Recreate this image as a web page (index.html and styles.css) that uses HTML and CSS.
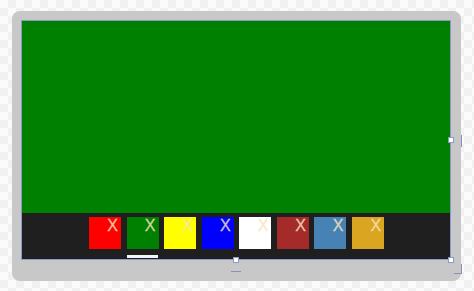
FILE: index.html
```html
<!DOCTYPE html>
<html>
<head>
<meta charset="utf-8">
<link rel="stylesheet" href="styles.css">
</head>
<body>
<div class="frame">
  <div class="content">
    <div class="stage"></div>
    <div class="bar">
      <div class="tab"><div class="sw" style="background:#ff0000"><span class="x">X</span></div></div>
      <div class="tab active"><div class="sw" style="background:#008000"><span class="x">X</span></div></div>
      <div class="tab"><div class="sw" style="background:#ffff00"><span class="x">X</span></div></div>
      <div class="tab"><div class="sw" style="background:#0000ff"><span class="x">X</span></div></div>
      <div class="tab"><div class="sw" style="background:#ffffff"><span class="x">X</span></div></div>
      <div class="tab"><div class="sw" style="background:#a52a2a"><span class="x">X</span></div></div>
      <div class="tab"><div class="sw" style="background:#4682b4"><span class="x">X</span></div></div>
      <div class="tab"><div class="sw" style="background:#daa520"><span class="x">X</span></div></div>
    </div>
    <span class="handle h-right"></span>
    <span class="handle h-bottom"></span>
    <span class="handle h-corner"></span>
  </div>
  <span class="grip g-right"></span>
  <span class="grip g-bottom"></span>
  <span class="grip g-corner"></span>
</div>
</body>
</html>
```
FILE: styles.css
```css
html, body {
  margin: 0;
  padding: 0;
}
body {
  width: 474px;
  height: 291px;
  overflow: hidden;
  background-color: #fbfbfb;
  background-image:
    linear-gradient(45deg, #f1f1f1 25%, transparent 25%, transparent 75%, #f1f1f1 75%),
    linear-gradient(45deg, #f1f1f1 25%, transparent 25%, transparent 75%, #f1f1f1 75%);
  background-size: 16px 16px;
  background-position: 0 0, 8px 8px;
  padding-top: 11px;
  padding-left: 12px;
  box-sizing: border-box;
  font-family: "Liberation Sans", Arial, sans-serif;
}
.frame {
  position: relative;
  width: 449px;
  height: 270px;
  box-sizing: border-box;
  padding: 10px 11px 22px 10px;
  background: #c8c8c8;
  border-radius: 8px;
}
.content {
  position: relative;
  display: flex;
  flex-direction: column;
  height: 238px;
  outline: 1px solid #8f99c8;
}
.stage {
  height: 192px;
  background: #008000;
}
.bar {
  flex: 1;
  background: #1f1f1f;
  display: flex;
  justify-content: center;
  align-items: flex-start;
  gap: 5.6px;
  padding-top: 4px;
  padding-left: 1px;
}
.tab {
  display: flex;
  flex-direction: column;
  align-items: center;
  height: 41px;
}
.tab.active::after {
  content: "";
  display: block;
  width: 31px;
  height: 3px;
  margin-top: 6px;
  background: #f4f4f4;
}
.sw {
  width: 32px;
  height: 32px;
  position: relative;
}
.x {
  position: absolute;
  right: 3px;
  top: 1px;
  font-size: 16px;
  line-height: 16px;
  color: rgba(248, 228, 190, 0.82);
  -webkit-text-stroke: 0.3px rgba(248, 228, 190, 0.82);
}
.handle {
  position: absolute;
  width: 4px;
  height: 4px;
  background: #ffffff;
  border: 1px solid #8f99c8;
}
.h-right { right: -4px; top: 116px; }
.h-bottom { left: 211px; bottom: -4px; }
.h-corner { right: -4px; bottom: -4px; }
.grip {
  position: absolute;
  background: #8a90b8;
}
.g-right { right: -1px; top: 124px; width: 1px; height: 12px; }
.g-bottom { left: 219px; bottom: 9px; width: 10px; height: 1px; }
.g-corner { right: -1px; bottom: 7px; width: 1px; height: 10px; }
.g-corner::after {
  content: "";
  position: absolute;
  right: 0;
  bottom: 0;
  width: 8px;
  height: 1px;
  background: #8a90b8;
}
```
